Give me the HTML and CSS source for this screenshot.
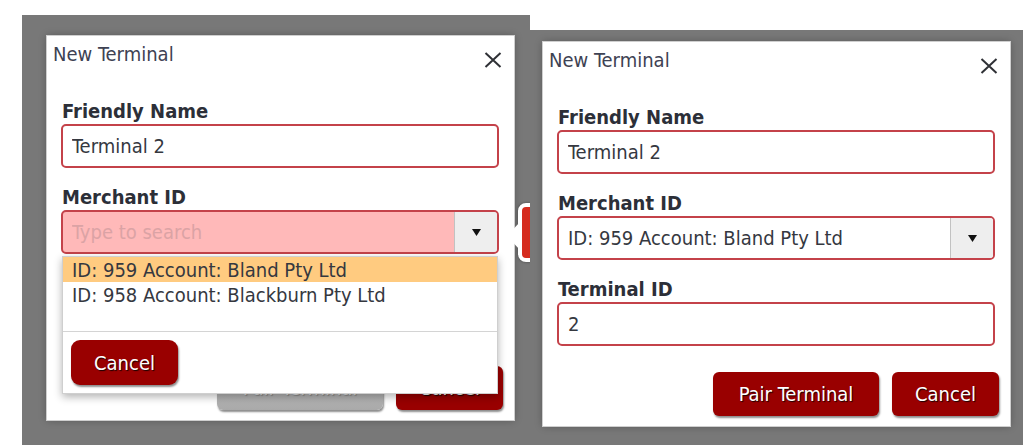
FILE: index.html
```html
<!DOCTYPE html>
<html lang="en">
<head>
    <meta charset="UTF-8">
    <title>New Terminal</title>
    <link rel="stylesheet" href="styles.css">
</head>
<body>
    <div class="shots">

        <!-- merchant search open, nothing picked yet -->
        <div class="shot shot-left">
            <div class="dialog">
                <div class="dialog-header">
                    <span class="dialog-title">New Terminal</span>
                    <button class="close-button">
                        <svg width="18" height="16" viewBox="0 0 18 16"><path d="M1.5 1 L16.5 15 M16.5 1 L1.5 15" stroke="#2f3136" stroke-width="2" fill="none"/></svg>
                    </button>
                </div>
                <div class="dialog-body">
                    <div class="field">
                        <label class="field-label">Friendly Name</label>
                        <input class="field-input" type="text" value="Terminal 2">
                    </div>
                    <div class="field field-combo">
                        <label class="field-label">Merchant ID</label>
                        <div class="combo combo-invalid">
                            <input class="combo-input" type="text" placeholder="Type to search">
                            <span class="combo-arrow">
                                <svg width="9" height="7" viewBox="0 0 9 7"><path d="M0 0 H9 L4.5 7 Z" fill="#111"/></svg>
                            </span>
                        </div>
                        <div class="combo-list">
                            <ul class="combo-options">
                                <li class="combo-option selected">ID: 959 Account: Bland Pty Ltd</li>
                                <li class="combo-option">ID: 958 Account: Blackburn Pty Ltd</li>
                            </ul>
                            <div class="combo-footer">
                                <button class="btn btn-small">Cancel</button>
                            </div>
                        </div>
                    </div>
                    <!-- terminal id only shows once a merchant is picked -->
                    <div class="field field-pending">
                        <label class="field-label">Terminal ID</label>
                        <input class="field-input" type="text" value="">
                    </div>
                </div>
                <div class="dialog-footer">
                    <button class="btn btn-pair btn-disabled">Pair Terminal</button>
                    <button class="btn btn-cancel">Cancel</button>
                </div>
            </div>
            <div class="error-tip"></div>
        </div>

        <!-- merchant picked -->
        <div class="shot shot-right">
            <div class="dialog">
                <div class="dialog-header">
                    <span class="dialog-title">New Terminal</span>
                    <button class="close-button">
                        <svg width="18" height="16" viewBox="0 0 18 16"><path d="M1.5 1 L16.5 15 M16.5 1 L1.5 15" stroke="#2f3136" stroke-width="2" fill="none"/></svg>
                    </button>
                </div>
                <div class="dialog-body">
                    <div class="field">
                        <label class="field-label">Friendly Name</label>
                        <input class="field-input" type="text" value="Terminal 2">
                    </div>
                    <div class="field">
                        <label class="field-label">Merchant ID</label>
                        <div class="combo">
                            <input class="combo-input" type="text" value="ID: 959 Account: Bland Pty Ltd">
                            <span class="combo-arrow">
                                <svg width="9" height="7" viewBox="0 0 9 7"><path d="M0 0 H9 L4.5 7 Z" fill="#111"/></svg>
                            </span>
                        </div>
                    </div>
                    <div class="field">
                        <label class="field-label">Terminal ID</label>
                        <input class="field-input" type="text" value="2">
                    </div>
                </div>
                <div class="dialog-footer">
                    <button class="btn btn-pair">Pair Terminal</button>
                    <button class="btn btn-cancel">Cancel</button>
                </div>
            </div>
        </div>

    </div>
</body>
</html>
```

FILE: styles.css
```css
* {
    margin: 0;
    padding: 0;
    box-sizing: border-box;
}

body {
    background-color: #fff;
    font-family: "DejaVu Sans Condensed", "DejaVu Sans", sans-serif;
    font-stretch: condensed;
    font-size: 20px;
    color: #35383f;
}

.shots {
    display: flex;
    align-items: flex-start;
}

.shot {
    background-color: #787878;
    position: relative;
    overflow: hidden;
}

.shot-left {
    margin-left: 22px;
    margin-top: 15px;
    width: 508px;
    height: 430px;
    padding: 21px 0 0 25px;
}

.shot-right {
    margin-top: 30px;
    width: 493px;
    height: 415px;
    padding: 12px 0 0 13px;
}

.dialog {
    width: 467px;
    background-color: #fff;
    box-shadow: 0 0 0 1px #cfcfcf, 0 0 8px rgba(0, 0, 0, 0.3);
    padding-bottom: 10px;
}

.dialog-header {
    display: flex;
    justify-content: space-between;
    align-items: flex-start;
    padding: 6px 12px 0 6px;
    height: 30px;
}

.dialog-title {
    line-height: 24px;
    color: #3e4253;
}

.close-button {
    background: none;
    border: none;
    margin-top: 10px;
    display: flex;
}

.dialog-body {
    padding: 33px 15px 0 14px;
}

.field {
    position: relative;
    margin-bottom: 17px;
}

.field:last-child {
    margin-bottom: 0;
}

.field-pending {
    visibility: hidden;
}

.field-label {
    display: block;
    font-weight: bold;
    line-height: 24px;
    margin-bottom: 1px;
    padding-left: 1px;
    color: #2c2f38;
}

.field-input,
.combo {
    width: 100%;
    height: 44px;
    border: 2px solid #c4424a;
    border-radius: 5px;
    background-color: #fff;
}

.field-input,
.combo-input {
    font: inherit;
    color: #35383f;
    padding: 0 9px;
    outline: none;
}

.combo {
    display: flex;
    overflow: hidden;
}

.combo-input {
    flex: 1;
    min-width: 0;
    border: none;
    background: transparent;
}

.combo-input::placeholder {
    color: #dba3a5;
}

.combo-invalid {
    background-color: #ffb9b9;
}

.combo-arrow {
    width: 43px;
    display: flex;
    align-items: center;
    justify-content: center;
    background-color: #eeeeee;
    border-left: 1px solid #c2c2c2;
}

.combo-list {
    position: absolute;
    top: calc(100% + 2px);
    left: 1px;
    right: 1px;
    background-color: #fff;
    border: 1px solid #cfcfcf;
    box-shadow: 0 3px 8px rgba(0, 0, 0, 0.3);
    z-index: 2;
}

.combo-options {
    list-style: none;
    height: 74px;
}

.combo-option {
    height: 25px;
    line-height: 27px;
    padding-left: 9px;
    white-space: nowrap;
}

.combo-option.selected {
    background-color: #ffcb80;
}

.combo-footer {
    border-top: 1px solid #d4d4d4;
    padding: 8px;
}

.dialog-footer {
    display: flex;
    justify-content: flex-end;
    gap: 13px;
    margin-top: 26px;
    padding-right: 11px;
}

.btn {
    height: 44px;
    border: none;
    border-radius: 6px;
    background-color: #990000;
    color: #fff;
    font: inherit;
    text-shadow: 1px 1px 1px #1a0000;
    box-shadow: 1px 2px 2px rgba(0, 0, 0, 0.45);
}

.btn-pair {
    width: 166px;
}

.btn-cancel {
    width: 107px;
}

.btn-small {
    width: 107px;
    height: 45px;
    border-radius: 9px;
}

.btn-disabled {
    background: linear-gradient(#cbcbcb, #a9a9a9);
    color: #e4e4e4;
    text-shadow: 1px 1px 1px #8a8a8a;
}

.error-tip {
    position: absolute;
    left: 496px;
    top: 188px;
    width: 60px;
    height: 59px;
    background-color: #d52b1e;
    border: 4px solid #fff;
    border-radius: 8px;
    box-shadow: 0 0 3px rgba(0, 0, 0, 0.4);
}

.error-tip::before {
    content: "";
    position: absolute;
    left: -15px;
    top: 16px;
    border-style: solid;
    border-width: 13px 12px 13px 0;
    border-color: transparent #fff transparent transparent;
}
```
